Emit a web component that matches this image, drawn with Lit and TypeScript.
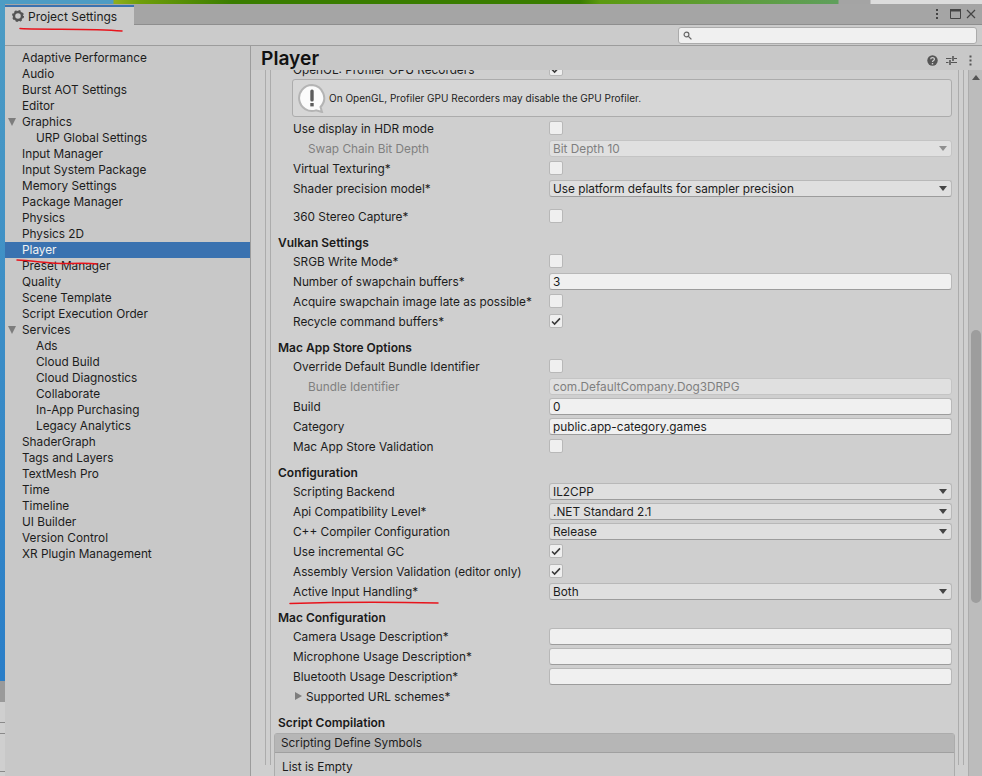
import { LitElement, html, css, svg } from "lit";
import { customElement } from "lit/decorators.js";

const sidebar: [string, number, string?][] = [
  ["Adaptive Performance", 0], ["Audio", 0], ["Burst AOT Settings", 0], ["Editor", 0],
  ["Graphics", 0, "open"], ["URP Global Settings", 1], ["Input Manager", 0], ["Input System Package", 0],
  ["Memory Settings", 0], ["Package Manager", 0], ["Physics", 0], ["Physics 2D", 0],
  ["Player", 0, "sel"], ["Preset Manager", 0], ["Quality", 0], ["Scene Template", 0],
  ["Script Execution Order", 0], ["Services", 0, "open"], ["Ads", 1], ["Cloud Build", 1],
  ["Cloud Diagnostics", 1], ["Collaborate", 1], ["In-App Purchasing", 1], ["Legacy Analytics", 1],
  ["ShaderGraph", 0], ["Tags and Layers", 0], ["TextMesh Pro", 0], ["Time", 0], ["Timeline", 0],
  ["UI Builder", 0], ["Version Control", 0], ["XR Plugin Management", 0],
];

const chk = (on = false, dis = false) => html`<span class="cb ${dis ? "dis" : ""}">${on
  ? html`<svg width="12" height="12" viewBox="0 0 12 12"><path d="M2 6.5 4.6 9 10 3.4" fill="none" stroke="#3a3a3a" stroke-width="1.6"/></svg>`
  : ""}</span>`;
const sel = (t: string, dis = false) => html`<span class="select ${dis ? "dis" : ""}">${t}<i class="caret"></i></span>`;
const inp = (t = "", dis = false) => html`<span class="input ${dis ? "dis" : ""}">${t}</span>`;
const row = (label: string, control: unknown, cls = "") => html`<div class="row ${cls}"><span class="lbl">${label}</span>${control}</div>`;

@customElement("app-root")
export class AppRoot extends LitElement {
  static styles = css`
    :host {
      display: block; width: 982px; height: 776px; overflow: hidden; position: relative;
      font-family: Inter, "Liberation Sans", sans-serif; font-size: 11.8px; color: #1c1c1c;
      background:
        linear-gradient(90deg, #4d9cc4 0, #4d9cc4 113px, #8fae1c 114px, #6f9e0a 140px, #3a7d00 232px, #3a7d00 580px, #5c9a10 600px, #5f9f5c 838px, #a4a4a4 839px, #a4a4a4 870px, #dcdcdc 871px) top left / 100% 4px no-repeat,
        linear-gradient(180deg, #4d9cc4 0, #2a7ec8 681px, #9a9a9a 681px, #9a9a9a 702px, #cfcfcf 702px, #cfcfcf 722px, #8a8a8a 722px, #8a8a8a 723px, #cfcfcf 723px, #cfcfcf 733px, #8a8a8a 733px, #8a8a8a 734px, #cfcfcf 734px, #cfcfcf 771px, #8a8a8a 771px, #8a8a8a 772px, #cfcfcf 772px) left top / 5px 100% no-repeat,
        #cfcfcf;
    }
    .window { margin: 4px 0 0 5px; height: 772px; display: flex; flex-direction: column; background: #cbcbcb; }
    .tabbar { height: 20px; flex: none; display: flex; background: #a5a5a5; border-bottom: 1px solid #8e8e8e; align-items: stretch; }
    .tab { width: 129px; margin-bottom: -1px; background: #cbcbcb; border-top: 2px solid #3a72b0; margin-top: 1px; display: flex; align-items: center; gap: 4px; padding-left: 7px; box-sizing: border-box; font-size: 12px; }
    .winbtns { margin-left: auto; display: flex; align-items: center; gap: 5px; padding-right: 6px; }
    .kebab { margin-right: 6px; }
    .toolbar { height: 20px; flex: none; display: flex; justify-content: flex-end; align-items: center; border-bottom: 1px solid #9c9c9c; padding-right: 5px; }
    .search { width: 293px; height: 15px; background: #f0f0f0; border: 1px solid #ababab; border-radius: 3px; display: flex; align-items: center; padding-left: 4px; }
    .body { flex: 1; min-height: 0; display: flex; }
    .side { width: 245px; flex: none; border-right: 1px solid #9c9c9c; padding-top: 4px; background: #c8c8c8; }
    .item { height: 16px; line-height: 16px; padding-left: 17px; position: relative; white-space: nowrap; }
    .item.sub { padding-left: 31px; }
    .item.sel { background: #3a72b0; color: #f2f2f2; }
    .fold { position: absolute; left: 3px; top: 4px; width: 0; height: 0; border-left: 4.5px solid transparent; border-right: 4.5px solid transparent; border-top: 8px solid #7d7d7d; }
    .main { flex: 1; min-width: 0; display: flex; flex-direction: column; }
    .title { height: 24px; flex: none; background: #c8c8c8; display: flex; align-items: center; padding-left: 10px; position: relative; z-index: 1; }
    .title h1 { margin: 0; font-size: 19.2px; font-weight: 600; color: #111; flex: 1; line-height: 24px; }
    .tools { display: flex; align-items: center; gap: 8px; padding-right: 6px; margin-top: 4px; }
    .scroll { flex: 1; min-height: 0; display: flex; overflow: hidden; background: #cfcfcf; }
    .pane { flex: 1; min-width: 0; overflow: hidden; }
    .frame { margin: 0 4px 0 14px; height: 100%; border: solid #acacac; border-width: 0 1px; padding: 0 4px; box-sizing: border-box; }
    .inner { height: 100%; border: solid #acacac; border-width: 0 1px; padding: 0 6px 0 7px; box-sizing: border-box; }
    .content { margin-top: -11px; }
    .row { height: 20px; display: grid; grid-template-columns: 271px 1fr; align-items: center; white-space: nowrap; }
    .lbl { padding-left: 15px; margin-top: 2px; }
    .row.ind .lbl { padding-left: 30px; color: #7f7f7f; }
    .row.gap { margin-top: 8px; }
    .head { height: 17px; line-height: 18px; margin-top: 8px; font-weight: 600; font-size: 12px; color: #1a1a1a; }
    .help { margin-left: 14px; height: 38px; margin-bottom: 1px; box-sizing: border-box; border: 1px solid #acacac; border-radius: 3px; background: #d6d6d6; display: flex; align-items: center; padding-left: 4px; font-size: 10px; letter-spacing: 0.025px; }
    .cb { width: 12px; height: 12px; border: 1px solid #b8b8b8; border-radius: 2px; background: #efefef; display: flex; }
    .cb.dis { background: #e2e2e2; }
    .select, .input { height: 13px; padding-top: 2px; line-height: 13px; border: 1px solid #b8b8b8; border-bottom-color: #9c9c9c; border-radius: 3px; padding-left: 3px; display: flex; align-items: center; justify-content: space-between; }
    .select { background: #dfdfdf; padding-right: 4px; }
    .input { background: #f0f0f0; }
    .select.dis, .input.dis { background: #e0e0e0; color: #7f7f7f; border-color: #c4c4c4; }
    .caret { width: 0; height: 0; margin-top: -2px; border-left: 4px solid transparent; border-right: 4px solid transparent; border-top: 5px solid #444; }
    .select.dis .caret { border-top-color: #8f8f8f; }
    .subrow { height: 20px; display: flex; align-items: center; padding-left: 17px; gap: 4px; }
    .subrow span { margin-top: 2px; }
    .tri { width: 0; height: 0; border-top: 4.5px solid transparent; border-bottom: 4.5px solid transparent; border-left: 7px solid #7d7d7d; }
    .box { margin: 2px -3px 0 -4px; border: 1px solid #acacac; border-radius: 3px 3px 0 0; }
    .boxhead { height: 18px; line-height: 18px; background: #b6b6b6; border-bottom: 1px solid #a0a0a0; padding-left: 6px; }
    .boxbody { height: 40px; padding: 6px 0 0 7px; background: #cbcbcb; line-height: 16px; }
    .bar { width: 13px; flex: none; border-left: 1px solid #acacac; background: #bcbcbc; display: flex; flex-direction: column; align-items: center; }
    .up { margin-top: 5px; width: 0; height: 0; border-left: 4px solid transparent; border-right: 4px solid transparent; border-bottom: 5px solid #555; }
    .thumb { margin-top: 250px; width: 10px; height: 273px; border-radius: 5px; background: #9d9d9d; }
    .ink { position: absolute; inset: 0; pointer-events: none; }
  `;

  render() {
    const gearTeeth = svg`<circle cx="6" cy="6" r="4" fill="none" stroke="#555" stroke-width="2.4"/><circle cx="6" cy="6" r="5.2" fill="none" stroke="#555" stroke-width="1.6" stroke-dasharray="2 2.08"/>`;
    return html`
      <div class="window">
        <div class="tabbar">
          <div class="tab"><svg width="12" height="12" viewBox="0 0 12 12">${gearTeeth}</svg><span>Project Settings</span></div>
          <div class="winbtns">
            <svg class="kebab" width="4" height="12" viewBox="0 0 4 12"><g fill="#444"><rect x="1" y="1" width="2" height="2"/><rect x="1" y="5" width="2" height="2"/><rect x="1" y="9" width="2" height="2"/></g></svg>
            <svg width="11" height="10" viewBox="0 0 11 10"><path d="M.5.5h10v9H.5z" fill="none" stroke="#444"/><path d="M0 0h11v2.5H0z" fill="#444"/></svg>
            <svg width="10" height="10" viewBox="0 0 10 10"><path d="M1 1l8 8M9 1l-8 8" stroke="#444" stroke-width="1.2"/></svg>
          </div>
        </div>
        <div class="toolbar">
          <div class="search"><svg width="9" height="9" viewBox="0 0 9 9"><circle cx="3.5" cy="3.5" r="2.4" fill="none" stroke="#666" stroke-width="1.2"/><path d="M5.4 5.4 8.4 8.4" stroke="#666" stroke-width="1.3"/></svg></div>
        </div>
        <div class="body">
          <nav class="side">
            ${sidebar.map(([t, lvl, f]) => html`<div class="item ${lvl ? "sub" : ""} ${f === "sel" ? "sel" : ""}">${f === "open" ? html`<i class="fold"></i>` : ""}${t}</div>`)}
          </nav>
          <div class="main">
            <div class="title">
              <h1>Player</h1>
              <div class="tools">
                <svg width="11" height="11" viewBox="0 0 11 11"><circle cx="5.5" cy="5.5" r="5.2" fill="#555"/><path d="M3.7 4.3c0-2.3 3.7-2.3 3.7-.1 0 1.4-1.9 1.4-1.9 2.8" fill="none" stroke="#ccc" stroke-width="1.3"/><rect x="4.8" y="8" width="1.4" height="1.4" fill="#ccc"/></svg>
                <svg width="11" height="11" viewBox="0 0 11 11"><g stroke="#555" stroke-width="1.2" fill="none"><path d="M0 3.5h5.5M8 3.5h3M0 7.5h2.5M5 7.5h6"/><path d="M7 1v5M4 5v5" stroke-width="1.6"/></g></svg>
                <svg width="11" height="11" viewBox="0 0 11 11"><g fill="#555"><rect x="4.5" y="0.5" width="2" height="2"/><rect x="4.5" y="4.5" width="2" height="2"/><rect x="4.5" y="8.5" width="2" height="2"/></g></svg>
              </div>
            </div>
            <div class="scroll">
              <div class="pane"><div class="frame"><div class="inner"><div class="content">
                ${row("OpenGL: Profiler GPU Recorders*", chk(true))}
                <div class="help">
                  <svg width="32" height="30" viewBox="0 0 32 30"><path d="M15 2a13 13 0 1 0 4 25.4l6 1.6-1.5-5A13 13 0 0 0 15 2z" fill="#fbfbfb" stroke="#b4b4b4" stroke-width="2"/><rect x="13.3" y="6.5" width="3.4" height="12" rx="1.5" fill="#5c5c5c"/><rect x="13.3" y="20" width="3.4" height="3.4" fill="#5c5c5c"/></svg>
                  <span>On OpenGL, Profiler GPU Recorders may disable the GPU Profiler.</span>
                </div>
                ${row("Use display in HDR mode", chk())}
                ${row("Swap Chain Bit Depth", sel("Bit Depth 10", true), "ind")}
                ${row("Virtual Texturing*", chk())}
                ${row("Shader precision model*", sel("Use platform defaults for sampler precision"))}
                ${row("360 Stereo Capture*", chk(), "gap")}
                <div class="head">Vulkan Settings</div>
                ${row("SRGB Write Mode*", chk())}
                ${row("Number of swapchain buffers*", inp("3"))}
                ${row("Acquire swapchain image late as possible*", chk())}
                ${row("Recycle command buffers*", chk(true))}
                <div class="head">Mac App Store Options</div>
                ${row("Override Default Bundle Identifier", chk())}
                ${row("Bundle Identifier", inp("com.DefaultCompany.Dog3DRPG", true), "ind")}
                ${row("Build", inp("0"))}
                ${row("Category", inp("public.app-category.games"))}
                ${row("Mac App Store Validation", chk())}
                <div class="head">Configuration</div>
                ${row("Scripting Backend", sel("IL2CPP"))}
                ${row("Api Compatibility Level*", sel(".NET Standard 2.1"))}
                ${row("C++ Compiler Configuration", sel("Release"))}
                ${row("Use incremental GC", chk(true))}
                ${row("Assembly Version Validation (editor only)", chk(true))}
                ${row("Active Input Handling*", sel("Both"))}
                <div class="head">Mac Configuration</div>
                ${row("Camera Usage Description*", inp())}
                ${row("Microphone Usage Description*", inp())}
                ${row("Bluetooth Usage Description*", inp())}
                <div class="subrow"><i class="tri"></i><span>Supported URL schemes*</span></div>
                <div class="head">Script Compilation</div>
                <div class="box">
                  <div class="boxhead">Scripting Define Symbols</div>
                  <div class="boxbody">List is Empty</div>
                </div>
              </div></div></div></div>
              <div class="bar"><i class="up"></i><div class="thumb"></div></div>
            </div>
          </div>
        </div>
      </div>
      <svg class="ink" width="982" height="776" viewBox="0 0 982 776">
        <g fill="none" stroke="#e8141c" stroke-width="1.5" stroke-linecap="round">
          <path d="M20 28.5C50 30 90 28 122 31"/>
          <path d="M17 260C35 261 55 264 70 263.5S90 263 97 264"/>
          <path d="M290 603.5C340 602 390 602 438 603"/>
        </g>
      </svg>
    `;
  }
}
